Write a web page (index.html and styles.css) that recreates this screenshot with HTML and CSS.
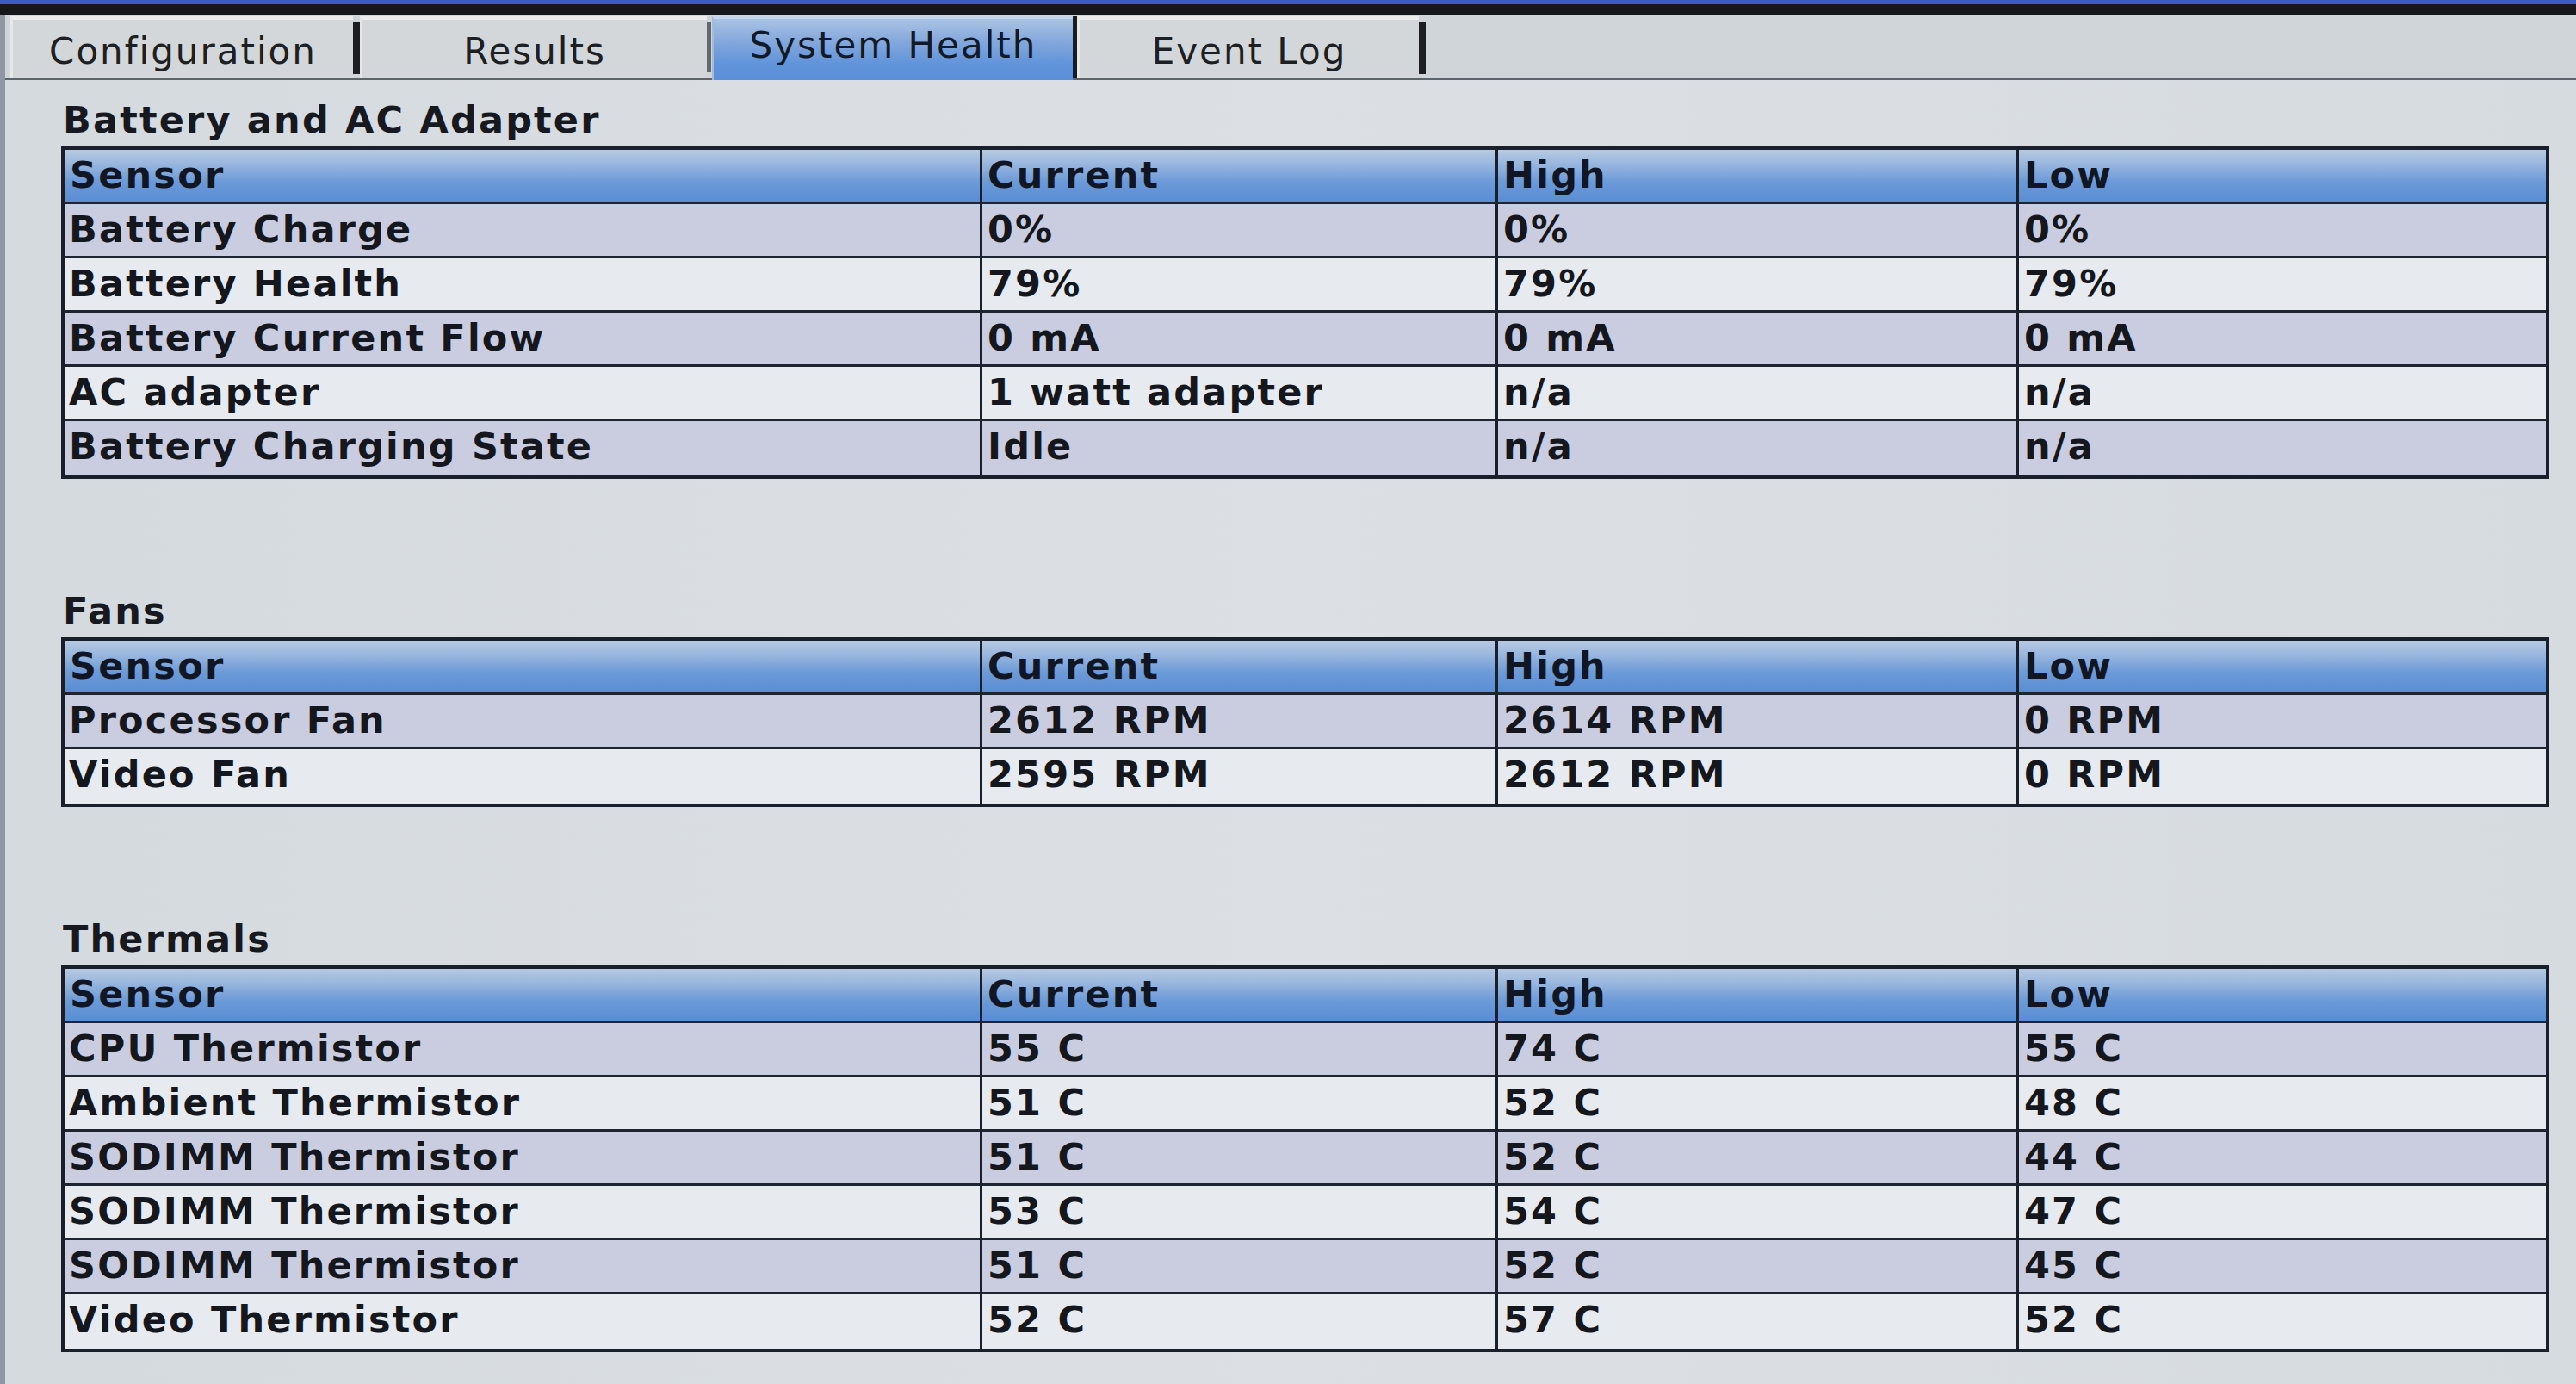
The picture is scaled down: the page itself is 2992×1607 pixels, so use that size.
FILE: index.html
```html
<!DOCTYPE html>
<html lang="en">
<head>
<meta charset="utf-8">
<title>System Health</title>
<link rel="stylesheet" href="styles.css">
</head>
<body>
<div class="topbar"></div>
<div class="window">
  <nav class="tabs">
    <div class="tab tab-config">Configuration</div>
    <div class="sep sep-dark"></div>
    <div class="tab tab-results">Results</div>
    <div class="sep sep-thin"></div>
    <div class="tab tab-active">System Health</div>
    <div class="sep sep-full"></div>
    <div class="tab tab-events">Event Log</div>
    <div class="sep sep-dark"></div>
  </nav>
  <main class="panel">
    <section class="group">
      <h2 class="group-title">Battery and AC Adapter</h2>
      <table class="sensors">
        <colgroup><col class="c-sensor"><col class="c-current"><col class="c-high"><col class="c-low"></colgroup>
        <thead><tr><th>Sensor</th><th>Current</th><th>High</th><th>Low</th></tr></thead>
        <tbody>
          <tr><td>Battery Charge</td><td>0%</td><td>0%</td><td>0%</td></tr>
          <tr><td>Battery Health</td><td>79%</td><td>79%</td><td>79%</td></tr>
          <tr><td>Battery Current Flow</td><td>0 mA</td><td>0 mA</td><td>0 mA</td></tr>
          <tr><td>AC adapter</td><td>1 watt adapter</td><td>n/a</td><td>n/a</td></tr>
          <tr><td>Battery Charging State</td><td>Idle</td><td>n/a</td><td>n/a</td></tr>
        </tbody>
      </table>
    </section>
    <section class="group">
      <h2 class="group-title">Fans</h2>
      <table class="sensors">
        <colgroup><col class="c-sensor"><col class="c-current"><col class="c-high"><col class="c-low"></colgroup>
        <thead><tr><th>Sensor</th><th>Current</th><th>High</th><th>Low</th></tr></thead>
        <tbody>
          <tr><td>Processor Fan</td><td>2612 RPM</td><td>2614 RPM</td><td>0 RPM</td></tr>
          <tr><td>Video Fan</td><td>2595 RPM</td><td>2612 RPM</td><td>0 RPM</td></tr>
        </tbody>
      </table>
    </section>
    <section class="group">
      <h2 class="group-title">Thermals</h2>
      <table class="sensors">
        <colgroup><col class="c-sensor"><col class="c-current"><col class="c-high"><col class="c-low"></colgroup>
        <thead><tr><th>Sensor</th><th>Current</th><th>High</th><th>Low</th></tr></thead>
        <tbody>
          <tr><td>CPU Thermistor</td><td>55 C</td><td>74 C</td><td>55 C</td></tr>
          <tr><td>Ambient Thermistor</td><td>51 C</td><td>52 C</td><td>48 C</td></tr>
          <tr><td>SODIMM Thermistor</td><td>51 C</td><td>52 C</td><td>44 C</td></tr>
          <tr><td>SODIMM Thermistor</td><td>53 C</td><td>54 C</td><td>47 C</td></tr>
          <tr><td>SODIMM Thermistor</td><td>51 C</td><td>52 C</td><td>45 C</td></tr>
          <tr><td>Video Thermistor</td><td>52 C</td><td>57 C</td><td>52 C</td></tr>
        </tbody>
      </table>
    </section>
  </main>
</div>
</body>
</html>
```

FILE: styles.css
```css
* { box-sizing: border-box; }

html, body {
  margin: 0;
  padding: 0;
  height: 100%;
}

body {
  background: #d7dce1;
  font-family: "DejaVu Sans", "Verdana", sans-serif;
  color: #15181e;
  overflow: hidden;
}

.topbar {
  height: 17px;
  background: #17161b;
  border-top: 5px solid #3c5cc2;
}

.window {
  border-left: 6px solid #8e97a2;
  min-height: calc(100% - 17px);
  background: linear-gradient(to right, #d5dade 0%, #dce0e4 50%, #d6dbe0 100%);
}

/* ---------- tabs ---------- */
.tabs {
  display: flex;
  align-items: stretch;
  height: 76px;
  padding: 2px 0 0 6px;
  background: #cfd5d9;
  border-bottom: 3px solid #5d646c;
}

.tab {
  display: flex;
  align-items: center;
  justify-content: center;
  height: 71px;
  padding-top: 6px;
  font-size: 42px;
  line-height: 49px;
  letter-spacing: 2px;
  color: #1c1f24;
  background: #d3d7d9;
  border-top: 4px solid #eceeee;
  border-left: 3px solid #e6e8e8;
}

.tab-config { width: 398px; }
.tab-results { width: 403px; }
.tab-events { width: 397px; }

.tab-active {
  width: 419px;
  height: 74px;
  padding-top: 0;
  padding-bottom: 10px;
  border-top: 3px solid #c4d6ec;
  border-left: 2px solid #9fbbe0;
  background: linear-gradient(to bottom, #a9c3e3 0%, #86a9dc 35%, #5f93da 75%, #5a90d9 100%);
  color: #111a28;
}

.sep {
  flex: none;
  align-self: center;
}

.sep-dark {
  width: 8px;
  height: 60px;
  margin-top: 2px;
  background: #1d1e21;
}

.sep-thin {
  width: 5px;
  height: 58px;
  margin-right: 1px;
  background: #626870;
}

.sep-full {
  width: 5px;
  align-self: stretch;
  background: #1a1b1e;
}

/* ---------- panel ---------- */
.panel {
  padding: 22px 0 0 65px;
}

.group + .group {
  margin-top: 129px;
}

.group-title {
  margin: 0 0 6px 0;
  padding-left: 2px;
  font-size: 43px;
  line-height: 49px;
  font-weight: bold;
  letter-spacing: 2.2px;
  color: #16191f;
}

.sensors {
  width: 2890px;
  table-layout: fixed;
  border-collapse: separate;
  border-spacing: 0;
  border: 4px solid #1a1f2c;
}

.c-sensor { width: 1066px; }
.c-current { width: 599px; }
.c-high { width: 605px; }

.sensors th,
.sensors td {
  height: 63px;
  padding: 5px 6px 0 6px;
  vertical-align: top;
  text-align: left;
  font-size: 43px;
  line-height: 49px;
  font-weight: bold;
  letter-spacing: 2.2px;
  white-space: nowrap;
  color: #14171d;
  border-right: 3px solid #1a1f2c;
  border-bottom: 3px solid #1f2431;
}

.sensors th:last-child,
.sensors td:last-child {
  border-right: none;
}

.sensors tbody tr:last-child td {
  border-bottom: none;
}

.sensors th {
  background: linear-gradient(to bottom, #b6cae2 0%, #98b6de 28%, #6b9ad8 62%, #5a8dd4 100%);
  color: #101624;
}

.sensors tbody tr:nth-child(odd) td {
  background: #cacce0;
}

.sensors tbody tr:nth-child(even) td {
  background: #e7eaee;
}

.sensors td:first-child {
  padding-left: 5px;
}
```
